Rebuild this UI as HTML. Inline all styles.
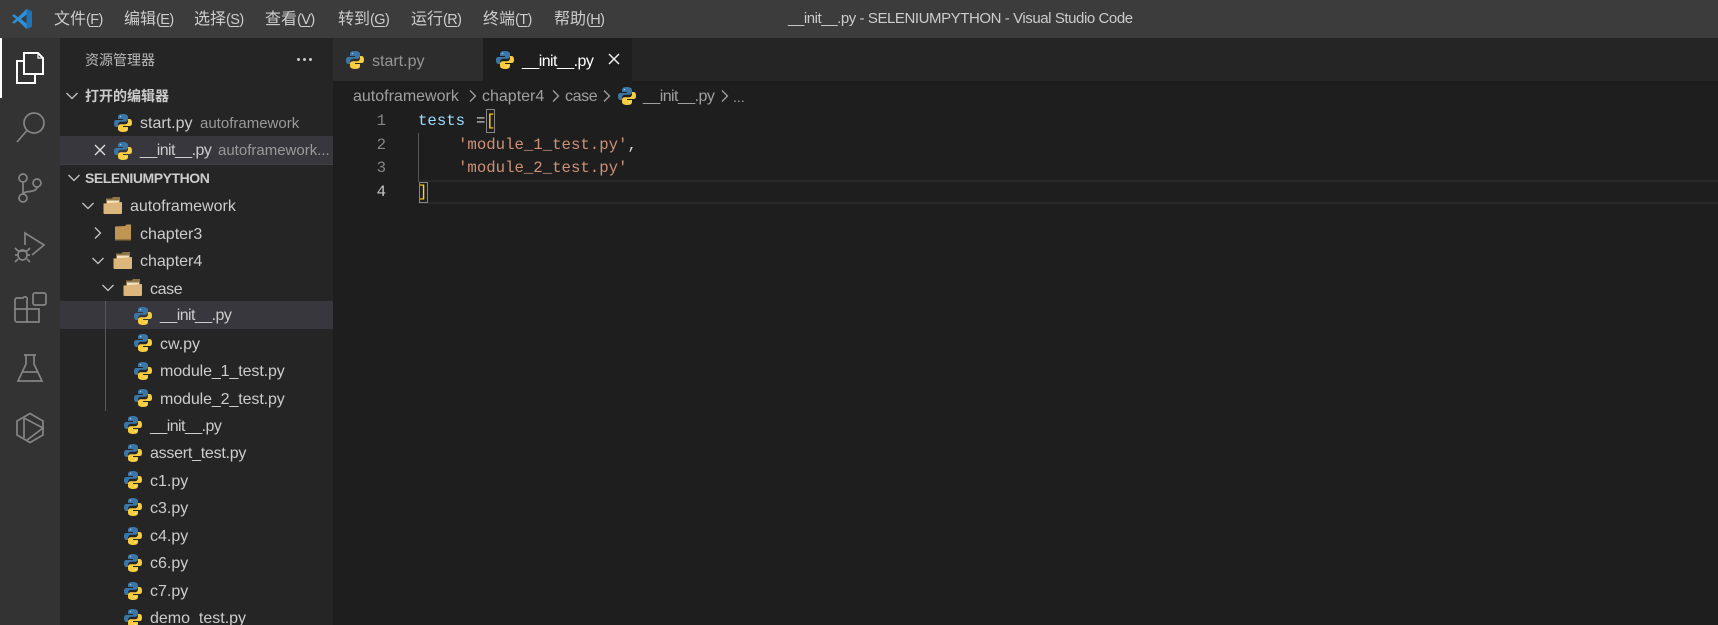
<!DOCTYPE html>
<html lang="zh">
<head>
<meta charset="utf-8">
<title>__init__.py - SELENIUMPYTHON - Visual Studio Code</title>
<style>
html,body{margin:0;padding:0;background:#1e1e1e}
#app{position:relative;width:1718px;height:625px;overflow:hidden;background:#1e1e1e;font-family:"Liberation Sans","Noto Sans CJK SC",sans-serif;color:#ccc}
.abs,.t,.py,.ch,.fo{position:absolute}
.t{white-space:nowrap;line-height:20px;font-size:16px}
.m{font-size:16px;color:#ccc;top:10px}
.m span{font-size:14.5px;letter-spacing:-.6px}
.m u{text-decoration:underline;text-underline-offset:2px}
.f{color:#cccccc}
.d{color:#9a9a9a;font-size:15px}
.i{letter-spacing:-.55px}
.py{width:20px;height:20px}
.ch{width:16px;height:16px;fill:none;stroke:#c5c5c5;stroke-width:1.3}
.fo{width:20px;height:18px}
.code{position:absolute;font-family:"Liberation Mono",monospace;font-size:15.7px;line-height:20px;white-space:pre}
.ln{position:absolute;font-family:"Liberation Mono",monospace;font-size:15.7px;line-height:20px;color:#858585;width:30px;text-align:right;left:356px}
.ai{position:absolute;left:13px;width:34px;height:34px;fill:none;stroke:#858585;stroke-width:1.7;overflow:visible}
</style>
</head>
<body>
<div id="app">
<svg width="0" height="0" style="position:absolute">
<defs>
<symbol id="p" viewBox="0 0 20 20">
<path fill="#3a77a8" d="M9.800 1C6 1 5 2.400 5 4v2h5v1H3.400C1.600 7 1 8.400 1 10.300c0 2.200.8 3.700 2.400 3.700H5v-2.200c0-1.800 1.400-3.100 3.200-3.100h4.300c1.300 0 2.500-1.200 2.500-2.600V4c0-1.800-1.900-3-5.200-3z"/>
<circle cx="7.500" cy="3.500" r=".8" fill="#9cc1dc"/>
<path fill="#f7cc3f" d="M10.200 19c3.800 0 4.800-1.400 4.800-3v-2h-5v-1h6.600c1.800 0 2.400-1.400 2.400-3.300 0-2.200-.8-3.700-2.400-3.700H15v2.200c0 1.800-1.400 3.100-3.200 3.100H7.500C6.200 11.300 5 12.500 5 13.900V16c0 1.800 1.900 3 5.200 3z"/>
<circle cx="12.500" cy="16.500" r=".8" fill="#fff0b0"/>
</symbol>
<symbol id="open" viewBox="0 0 20 18">
<path fill="#8f7548" d="M3 4V1.500h5.500L10 0h7v6H3z"/>
<path fill="#f3e2c0" d="M4 3.500h12V7H4z"/>
<path fill="#dcb67a" d="M.5 6.500 19 5v11a1 1 0 0 1-1 1H1.500a1 1 0 0 1-1-1z"/>
</symbol>
<symbol id="closed" viewBox="0 0 20 18">
<path fill="#c09553" d="M2 2.500 12 2l1.500-1.500H18V16H2z"/>
<path fill="#8f7240" d="M2 15h16v1.500H2z"/>
</symbol>
<symbol id="down" viewBox="0 0 16 16"><path d="M2.500 5 8 10.500 13.500 5"/></symbol>
<symbol id="right" viewBox="0 0 16 16"><path d="M5 2.500 10.500 8 5 13.500"/></symbol>
</defs>
</svg>

<!-- title bar -->
<div class="abs" style="left:0;top:0;width:1718px;height:38px;background:#3c3c3c"></div>
<svg class="abs" style="left:11px;top:8px" width="22" height="22" viewBox="0 0 22 22">
<path fill="#2f8fd8" d="M15.500 1 21 3.500v15L15.500 21 7 12.800l-4 3L1 14.500 5 11 1 7.500l2-1.300 4 3zM15.500 6.500 10 11l5.500 4.500z"/>
<path fill="#1f74b8" d="M15.500 1 21 3.500v15L15.500 21V15.500L15.500 6.500z"/>
</svg>
<div class="t m" style="left:54px">文件<span>(<u>F</u>)</span></div>
<div class="t m" style="left:124px">编辑<span>(<u>E</u>)</span></div>
<div class="t m" style="left:194px">选择<span>(<u>S</u>)</span></div>
<div class="t m" style="left:265px">查看<span>(<u>V</u>)</span></div>
<div class="t m" style="left:338px">转到<span>(<u>G</u>)</span></div>
<div class="t m" style="left:411px">运行<span>(<u>R</u>)</span></div>
<div class="t m" style="left:483px">终端<span>(<u>T</u>)</span></div>
<div class="t m" style="left:554px">帮助<span>(<u>H</u>)</span></div>
<div class="t" style="left:788px;top:9px;font-size:15px;color:#ccc;letter-spacing:-.43px">__init__.py - SELENIUMPYTHON - Visual Studio Code</div>

<!-- activity bar -->
<div class="abs" style="left:0;top:38px;width:60px;height:587px;background:#333"></div>
<div class="abs" style="left:0;top:38px;width:2px;height:60px;background:#fff"></div>
<svg class="ai" style="top:48px;stroke:#fff;stroke-width:2" viewBox="0 0 34 34">
<path d="M11 5H25L30 10V26H11Z"/><path d="M25 5v5h5" stroke-width="1.200"/><path d="M11 13H4V35H22V26"/>
</svg>
<svg class="ai" style="top:109px" viewBox="0 0 34 34"><circle cx="21" cy="14" r="10"/><path d="M14 21.500 4 33"/></svg>
<svg class="ai" style="top:172px" viewBox="0 0 34 34"><circle cx="10" cy="6" r="4"/><circle cx="10" cy="26" r="4"/><circle cx="24" cy="11" r="4"/><path d="M10 10v12"/><path d="M24 15c0 3-3 4-7 4.500S11 20 10 22"/></svg>
<svg class="ai" style="top:231px" viewBox="0 0 34 34">
<path d="M12 14V2l19 12-12 10"/><ellipse cx="9.500" cy="24" rx="4.500" ry="5"/><path d="M5 20h9M2 17l3 3M17 17l-3 3M2 24h3M14 24h3M2 31l3-3M17 31l-3-3"/>
</svg>
<svg class="ai" style="top:291px" viewBox="0 0 34 34"><path d="M2 9a2 2 0 0 1 2-2h6a2 2 0 0 1 4 2v9h12v13H4a2 2 0 0 1-2-2z"/><path d="M2 18h12v13"/><rect x="20" y="2" width="13" height="12" rx="2"/></svg>
<svg class="ai" style="top:352px" viewBox="0 0 34 34"><path d="M11 3h12M13 3v9L5 29h24L21 12V3"/><path d="M9 20h16"/></svg>
<svg class="ai" style="top:413px" viewBox="0 0 34 34"><path d="M17 .5 30 8v14L17 29.500 4 22V8z"/><path d="M11 5V25"/><path d="M11 5 30 15 14 27"/></svg>

<!-- sidebar -->
<div class="abs" style="left:60px;top:38px;width:273px;height:587px;background:#252526"></div>
<div class="t" style="left:85px;top:50px;font-size:14px;color:#bbb">资源管理器</div>
<div class="abs" style="left:297px;top:58px;width:3px;height:3px;background:#ccc;box-shadow:6px 0 0 #ccc,12px 0 0 #ccc;border-radius:50%"></div>

<svg class="ch" style="left:64px;top:88px"><use href="#down"/></svg>
<div class="t" style="left:85px;top:86px;font-size:14px;font-weight:bold;color:#ccc">打开的编辑器</div>

<svg class="py" style="left:113px;top:113px"><use href="#p"/></svg>
<div class="t f" style="left:140px;top:114px">start.py</div>
<div class="t d" style="left:200px;top:114px">autoframework</div>

<div class="abs" style="left:60px;top:136px;width:273px;height:28px;background:#37373d"></div>
<svg class="abs" style="left:93px;top:143px" width="14" height="14" viewBox="0 0 14 14"><path d="M2 2l10 10M12 2 2 12" stroke="#ddd" stroke-width="1.400" fill="none"/></svg>
<svg class="py" style="left:113px;top:141px"><use href="#p"/></svg>
<div class="t f i" style="left:140px;top:141px">__init__.py</div>
<div class="t d" style="left:218px;top:141px">autoframework...</div>
<div class="abs" style="left:60px;top:164px;width:273px;height:1px;background:#3f3f46"></div>

<svg class="ch" style="left:66px;top:170px"><use href="#down"/></svg>
<div class="t" style="left:85px;top:168px;font-size:14px;font-weight:bold;color:#ccc;letter-spacing:-.45px">SELENIUMPYTHON</div>

<svg class="ch" style="left:80px;top:198px"><use href="#down"/></svg>
<svg class="fo" style="left:103px;top:197px"><use href="#open"/></svg>
<div class="t f" style="left:130px;top:197px">autoframework</div>

<svg class="ch" style="left:90px;top:225px"><use href="#right"/></svg>
<svg class="fo" style="left:113px;top:224px"><use href="#closed"/></svg>
<div class="t f" style="left:140px;top:225px">chapter3</div>

<svg class="ch" style="left:90px;top:253px"><use href="#down"/></svg>
<svg class="fo" style="left:113px;top:252px"><use href="#open"/></svg>
<div class="t f" style="left:140px;top:252px">chapter4</div>

<svg class="ch" style="left:100px;top:280px"><use href="#down"/></svg>
<svg class="fo" style="left:123px;top:279px"><use href="#open"/></svg>
<div class="t f" style="left:150px;top:280px;letter-spacing:-.4px">case</div>

<div class="abs" style="left:60px;top:301px;width:273px;height:28px;background:#37373d"></div>
<div class="abs" style="left:105px;top:301px;width:1px;height:110px;background:#585858"></div>

<svg class="py" style="left:133px;top:306px"><use href="#p"/></svg>
<div class="t f i" style="left:160px;top:306px">__init__.py</div>
<svg class="py" style="left:133px;top:333px"><use href="#p"/></svg>
<div class="t f" style="left:160px;top:335px">cw.py</div>
<svg class="py" style="left:133px;top:361px"><use href="#p"/></svg>
<div class="t f" style="left:160px;top:362px;letter-spacing:-.1px">module_1_test.py</div>
<svg class="py" style="left:133px;top:388px"><use href="#p"/></svg>
<div class="t f" style="left:160px;top:390px;letter-spacing:-.1px">module_2_test.py</div>

<svg class="py" style="left:123px;top:415px"><use href="#p"/></svg>
<div class="t f i" style="left:150px;top:417px">__init__.py</div>
<svg class="py" style="left:123px;top:443px"><use href="#p"/></svg>
<div class="t f" style="left:150px;top:444px;letter-spacing:-.25px">assert_test.py</div>
<svg class="py" style="left:123px;top:470px"><use href="#p"/></svg>
<div class="t f" style="left:150px;top:472px">c1.py</div>
<svg class="py" style="left:123px;top:497px"><use href="#p"/></svg>
<div class="t f" style="left:150px;top:499px">c3.py</div>
<svg class="py" style="left:123px;top:526px"><use href="#p"/></svg>
<div class="t f" style="left:150px;top:527px">c4.py</div>
<svg class="py" style="left:123px;top:553px"><use href="#p"/></svg>
<div class="t f" style="left:150px;top:554px">c6.py</div>
<svg class="py" style="left:123px;top:581px"><use href="#p"/></svg>
<div class="t f" style="left:150px;top:582px">c7.py</div>
<svg class="py" style="left:123px;top:608px"><use href="#p"/></svg>
<div class="t f" style="left:150px;top:609px">demo_test.py</div>

<!-- tabs -->
<div class="abs" style="left:333px;top:38px;width:1385px;height:43px;background:#252526"></div>
<div class="abs" style="left:333px;top:38px;width:150px;height:43px;background:#2d2d2d"></div>
<svg class="py" style="left:345px;top:50px"><use href="#p"/></svg>
<div class="t" style="left:372px;top:52px;color:#969696">start.py</div>
<div class="abs" style="left:483px;top:38px;width:149px;height:43px;background:#1e1e1e"></div>
<svg class="py" style="left:495px;top:50px"><use href="#p"/></svg>
<div class="t i" style="left:522px;top:52px;color:#fff">__init__.py</div>
<svg class="abs" style="left:607px;top:52px" width="14" height="14" viewBox="0 0 14 14"><path d="M2 2l10 10M12 2 2 12" stroke="#eee" stroke-width="1.500" fill="none"/></svg>

<!-- breadcrumb -->
<div class="t" style="left:353px;top:87px;color:#a0a0a0">autoframework</div>
<svg class="ch" style="left:465px;top:88px;stroke:#a0a0a0"><use href="#right"/></svg>
<div class="t" style="left:482px;top:87px;color:#a0a0a0">chapter4</div>
<svg class="ch" style="left:548px;top:88px;stroke:#a0a0a0"><use href="#right"/></svg>
<div class="t" style="left:565px;top:87px;color:#a0a0a0;letter-spacing:-.4px">case</div>
<svg class="ch" style="left:599px;top:88px;stroke:#a0a0a0"><use href="#right"/></svg>
<svg class="py" style="left:617px;top:86px"><use href="#p"/></svg>
<div class="t i" style="left:643px;top:87px;color:#a0a0a0">__init__.py</div>
<svg class="ch" style="left:717px;top:88px;stroke:#a0a0a0"><use href="#right"/></svg>
<div class="t" style="left:733px;top:87px;color:#a0a0a0;font-size:14px">...</div>

<!-- editor -->
<div class="abs" style="left:418px;top:180px;width:1300px;height:2px;background:#282828"></div>
<div class="abs" style="left:418px;top:202px;width:1300px;height:2px;background:#282828"></div>
<div class="abs" style="left:418px;top:133px;width:1px;height:49px;background:#555"></div>
<div class="abs" style="left:486px;top:109px;width:7px;height:22px;border:1px solid #888"></div>
<div class="abs" style="left:419px;top:182px;width:7px;height:19px;border:1px solid #888"></div>

<div class="ln" style="top:111px">1</div>
<div class="ln" style="top:135px">2</div>
<div class="ln" style="top:158px">3</div>
<div class="ln" style="top:182px;color:#c6c6c6">4</div>

<div class="code" style="left:418px;top:111px;color:#9cdcfe">tests</div>
<div class="code" style="left:476px;top:111px;color:#d4d4d4">=</div>
<div class="code" style="left:486px;top:111px;color:#ffd700">[</div>
<div class="code" style="left:458px;top:135px"><span style="color:#ce9178">'module_1_test.py'</span><span style="color:#d4d4d4">,</span></div>
<div class="code" style="left:458px;top:158px;color:#ce9178">'module_2_test.py'</div>
<div class="code" style="left:418px;top:182px;color:#ffd700">]</div>
</div>
</body>
</html>
